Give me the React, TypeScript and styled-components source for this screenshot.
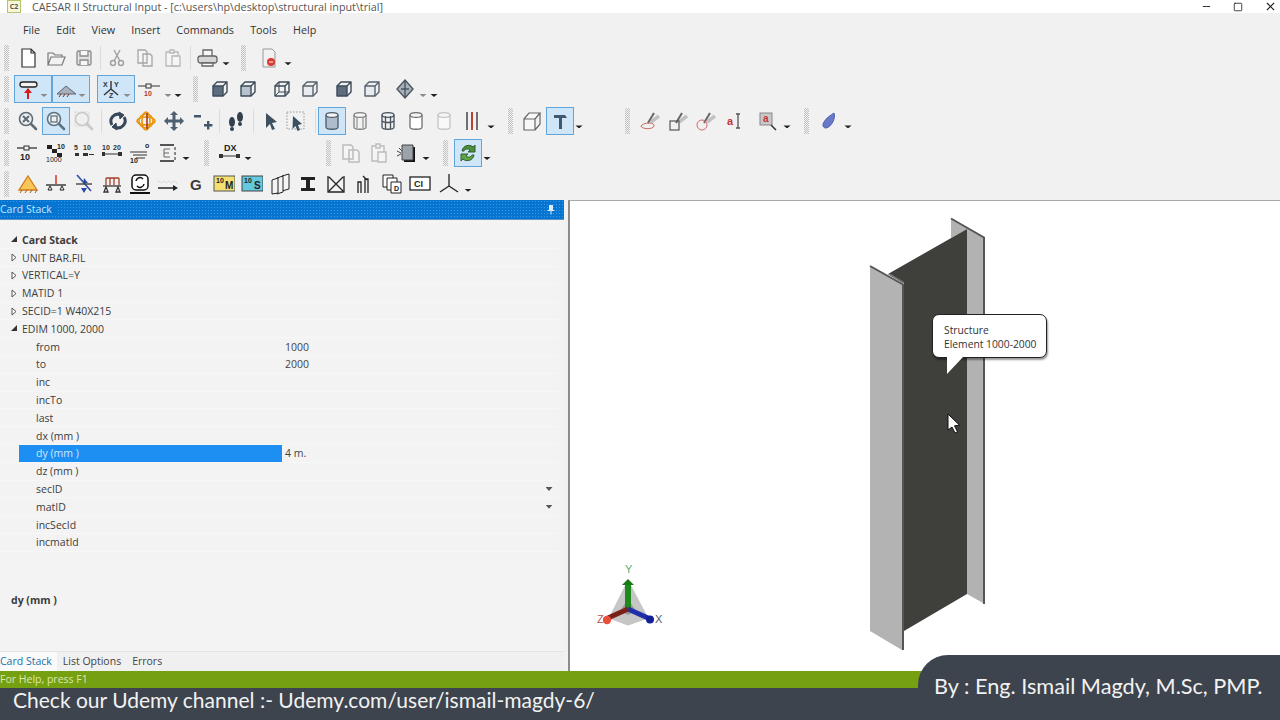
import { FC, ReactNode } from 'react';
import styled, { createGlobalStyle } from 'styled-components';
import { Minus, Square, X } from 'lucide-react';

const GlobalStyle = createGlobalStyle`
  html, body {
    margin: 0;
    padding: 0;
    background: #f0f0f0;
  }
`;

const Page = styled.div`
  position: relative;
  display: flex;
  flex-direction: column;
  width: 1280px;
  height: 720px;
  overflow: hidden;
  background: #f1f1f1;
  color: #3c3c3c;
  font-family: 'Open Sans', 'Noto Sans', sans-serif;
  font-size: 10.5px;
`;

const TitleBar = styled.div`
  display: flex;
  align-items: center;
  height: 13px;
  padding-left: 7px;
  font-size: 10.75px;
  color: #555;
  background: #fff;
`;

const AppBadge = styled.span`
  width: 12px;
  height: 11px;
  margin-right: 11px;
  border: 1px solid #b7c46a;
  background: #f4f6d8;
  font-size: 7px;
  font-weight: 700;
  line-height: 11px;
  text-align: center;
  color: #555;
`;

const TitleText = styled.span`
  flex: 1;
  white-space: nowrap;
`;

const WindowButton = styled.span`
  display: flex;
  justify-content: center;
  width: 20px;
  margin-left: 12px;
  color: #222;
`;

const MenuBar = styled.div`
  display: flex;
  align-items: center;
  height: 25px;
  padding: 4px 0 0 23px;
  gap: 16.1px;
  font-size: 10.8px;
  color: #333;
`;

const ToolRow = styled.div`
  display: flex;
  align-items: center;
  height: 31.6px;
`;

const Tool = styled.span<{ $w: number; $active: boolean }>`
  display: flex;
  align-items: center;
  box-sizing: border-box;
  flex: none;
  width: ${(p) => p.$w}px;
  height: 28px;
  padding-left: ${(p) => (p.$active ? 2 : 3)}px;
  ${(p) =>
    p.$active &&
    `
    background: #cfe5f8;
    border: 1px solid #63a5d8;
  `}
`;

const Gap = styled.span<{ $w: number }>`
  flex: none;
  width: ${(p) => Math.max(p.$w, 0)}px;
  margin-left: ${(p) => Math.min(p.$w, 0)}px;
`;

const Grip = styled.span`
  flex: none;
  width: 5px;
  height: 26px;
  background: repeating-conic-gradient(#c2c2c2 0 25%, transparent 0 50%) 0 0 / 2px 2px;
`;

const Separator = styled.span`
  flex: none;
  width: 1px;
  height: 24px;
  margin: 0 2px;
  background: #dcdcdc;
`;

const DropArrow = styled.span<{ $soft?: boolean }>`
  flex: none;
  width: 10px;
  height: 3px;
  margin-top: 12px;
  background: ${(p) => (p.$soft ? '#8a8a8a' : '#222')};
  clip-path: polygon(1.5px 0, 8.5px 0, 5px 100%);
`;

const IconSvg = styled.svg`
  display: block;
  flex: none;
`;

const Lbl = styled.text<{ $s?: number; $light?: boolean }>`
  font-family: 'Liberation Sans', sans-serif;
  font-size: ${(p) => p.$s ?? 7}px;
  font-weight: ${(p) => (p.$light ? 400 : 700)};
  stroke: none;
`;

const Workspace = styled.div`
  display: flex;
  height: 471px;
`;

const Panel = styled.div`
  display: flex;
  flex-direction: column;
  flex: none;
  width: 564px;
  background: #f3f3f3;
`;

const PanelHeader = styled.div`
  display: flex;
  align-items: center;
  justify-content: space-between;
  height: 20px;
  padding-right: 9px;
  border-bottom: 1px solid #5c92c4;
  box-sizing: border-box;
  color: #c4e6ff;
  background-color: #0675d2;
  background-image: radial-gradient(#3e97e2 0.6px, transparent 0.7px);
  background-size: 3px 3px;
`;

const PanelTitle = styled.span`
  padding-right: 6px;
  background: #0675d2;
`;

const PropertyList = styled.div`
  padding-top: 11.5px;
  height: 340px;
  box-sizing: border-box;
`;

const PropertyRow = styled.div`
  display: grid;
  grid-template-columns: 282px 1fr 18px;
  align-items: center;
  height: 17.8px;
  margin-right: 6px;
  border-bottom: 1px solid #f7f7f7;
  box-sizing: border-box;
`;

const NameCell = styled.div<{ $depth: number; $selected?: boolean; $bold?: boolean }>`
  position: relative;
  display: flex;
  align-items: center;
  height: 100%;
  margin-left: ${(p) => (p.$depth ? 19 : 0)}px;
  padding-left: ${(p) => (p.$depth ? 17 : 22)}px;
  font-weight: ${(p) => (p.$bold ? 700 : 400)};
  color: ${(p) => (p.$selected ? '#cfe8ff' : '#3c3c3c')};
  background: ${(p) => (p.$selected ? '#1e8ff2' : 'transparent')};
`;

const Twist = styled.svg`
  position: absolute;
  left: 10px;
  top: 4px;
`;

const ValueCell = styled.div`
  padding-left: 3px;
  color: #444;
`;

const ComboArrow = styled.span`
  justify-self: center;
  width: 7px;
  height: 4px;
  background: #555;
  clip-path: polygon(0 0, 100% 0, 50% 100%);
`;

const Description = styled.div`
  flex: 1;
  padding: 33px 0 0 11px;
  font-weight: 700;
  border-bottom: 1px solid #e4e4e4;
`;

const Tabs = styled.div`
  display: flex;
  height: 19px;
  flex: none;
  background: #f0f0f0;
`;

const TabItem = styled.span<{ $active?: boolean }>`
  display: flex;
  align-items: center;
  padding: 0 5.5px 0 ${(p) => (p.$active ? 0 : 5.5)}px;
  color: ${(p) => (p.$active ? '#1b6fa8' : '#444')};
  background: ${(p) => (p.$active ? '#fafafa' : 'transparent')};
`;

const Viewport = styled.div`
  position: relative;
  flex: 1;
  margin-left: 4px;
  border-left: 2px solid #8c8c8c;
  border-top: 1px solid #a8a8a8;
  background: #fff;
`;

const SceneSvg = styled.svg`
  display: block;
`;

const AxisLabel = styled.text<{ $c: string }>`
  font-family: 'Liberation Sans', sans-serif;
  font-size: 11px;
  fill: ${(p) => p.$c};
`;

const Callout = styled.div`
  position: absolute;
  left: 362px;
  top: 113px;
  width: 115px;
  height: 44px;
  box-sizing: border-box;
  padding: 8px 0 0 11px;
  border: 1px solid #222;
  border-radius: 7px;
  background: #fff;
  box-shadow: 1px 2px 2px rgba(0, 0, 0, 0.4);
  line-height: 14px;
  font-size: 10.3px;
  color: #333;
  white-space: nowrap;

  &:after {
    content: '';
    position: absolute;
    left: 14px;
    top: 42px;
    width: 16px;
    height: 17px;
    background: #fff;
    clip-path: polygon(0 0, 100% 0, 0 100%);
  }
`;

const StatusBar = styled.div`
  display: flex;
  align-items: center;
  height: 17px;
  font-size: 10.5px;
  color: #dfe8b0;
  background: #74a012;
`;

const PromoBar = styled.div`
  display: flex;
  align-items: center;
  box-sizing: border-box;
  height: 32px;
  padding: 0 0 8px 13px;
  font-family: Lato, 'Open Sans', sans-serif;
  font-size: 21.03px;
  color: #f2f2f2;
  background: #3d444e;
  white-space: nowrap;
`;

const ByLine = styled.div`
  position: absolute;
  right: 0;
  top: 655px;
  display: flex;
  align-items: center;
  box-sizing: border-box;
  width: 362px;
  height: 65px;
  padding: 0 0 4px 16px;
  border-top-left-radius: 30px;
  font-family: Lato, 'Open Sans', sans-serif;
  font-size: 21.7px;
  color: #f2f2f2;
  background: #3d444e;
  white-space: nowrap;
`;

const Ic: FC<{ children: ReactNode }> = ({ children }) => (
  <IconSvg width="22" height="22" viewBox="0 0 22 22" fill="none">
    {children}
  </IconSvg>
);

const Cube: FC<{ fill: string; line: string; wire?: boolean }> = ({ fill, line, wire }) => (
  <g stroke={line} strokeWidth="1.4" strokeLinejoin="round">
    <path d="M4 8h10v10H4z" fill={fill} />
    <path d="M4 8l4-4h10v10l-4 4M14 8l4-4" />
    {wire && <path d="M8 4v10h10M8 14l-4 4" strokeWidth="1" />}
  </g>
);

const Cyl: FC<{ fill: string; line: string; ribs?: boolean; inner?: boolean }> = ({ fill, line, ribs, inner }) => (
  <g stroke={line} strokeWidth="1.3">
    <path d="M5 5v12c0 3 12 3 12 0V5" fill={fill} />
    <ellipse cx="11" cy="5" rx="6" ry="2.4" fill={ribs ? 'none' : '#f4f4f4'} />
    {ribs && <path d="M8.5 6v13M13.5 6v13M5 11c2 2 10 2 12 0" />}
    {inner && <path d="M8 7v11M14 7v11" strokeWidth="1" />}
  </g>
);

const Mag: FC<{ color: string; children?: ReactNode }> = ({ color, children }) => (
  <g stroke={color} fill="none">
    <circle cx="9" cy="9" r="6.5" strokeWidth="1.6" fill="#eef0f2" />
    <path d="M14 14l5 5" strokeWidth="2.6" strokeLinecap="round" />
    {children}
  </g>
);

const Pencil: FC<{ children: ReactNode }> = ({ children }) => (
  <g>
    <path d="M15 3l-6 10" stroke="#666" strokeWidth="2" />
    <path d="M12 12l8-6" stroke="#999" strokeWidth="3.5" opacity="0.55" />
    {children}
  </g>
);

const icons: Record<string, ReactNode> = {
  new: <path d="M5 2h9l4 4v14H5z M14 2v4h4" fill="#fff" stroke="#333" strokeWidth="1.2" />,
  open: <path d="M3 18V6h5l2 2h7v2M3 18l3-8h14l-3 8z" fill="#f2f2f2" stroke="#777" strokeWidth="1.2" />,
  save: <g stroke="#8a8a8a" strokeWidth="1.3"><rect x="4" y="4" width="14" height="14" rx="1.5" fill="#e2e2e2" /><path d="M7 4v5h8V4M7 18v-5h8v5" fill="#f6f6f6" /></g>,
  cut: <g stroke="#a0a0a0" strokeWidth="1.4"><circle cx="7" cy="16" r="2.5" /><circle cx="15" cy="16" r="2.5" /><path d="M8 14l6-11M14 14L8 3" /></g>,
  copy: <path d="M4 3h7l2 2v11H4zM9 7h7l2 2v10H9z" fill="#f5f5f5" stroke="#a5a5a5" strokeWidth="1.3" />,
  paste: <g stroke="#b8b8b8" strokeWidth="1.3" fill="#f5f5f5"><path d="M4 5h12v14H4z" /><path d="M8 3h4v3H8z" /><path d="M10 9h8v10h-8z" /></g>,
  print: <g stroke="#666" strokeWidth="1.3"><path d="M7 9V3h9v6" fill="#f7f7f7" /><rect x="2" y="9" width="19" height="7" rx="2.5" fill="#d5d5d5" /><path d="M6 16h11v3H6z" fill="#fff" /></g>,
  report: <g><path d="M5 2h9l3 3v15H5z" fill="#f2f0f0" stroke="#999" /><circle cx="13" cy="15" r="4" fill="#d93a32" /><path d="M11 15h4" stroke="#fff" /></g>,
  load: <g><rect x="3" y="4" width="17" height="5" rx="2.5" fill="#f3f3f3" stroke="#222" strokeWidth="1.3" /><path d="M10 21v-6H7l4-5 4 5h-3v6z" fill="#d71a1a" /></g>,
  wedge: <g stroke="#5a6a78"><path d="M2 16l9-8 10 8z" fill="#a9b0bc" /><path d="M4 19l2-3M8 19l2-3M12 19l2-3" stroke="#7a3020" /></g>,
  axes: <g stroke="#333" strokeWidth="1.4"><path d="M11 11V3M11 11l-7 6M11 11l7 6" /><Lbl x="3" y="9" fill="#333">X</Lbl><Lbl x="14" y="9" fill="#333">Y</Lbl><Lbl x="9" y="20" fill="#333">Z</Lbl></g>,
  nodeTen: <g><path d="M0 8h22" stroke="#333" /><rect x="8" y="6" width="5" height="4" fill="#eee" stroke="#333" /><Lbl x="6" y="18" fill="#b3352a">10</Lbl></g>,
  cubeA: <Cube fill="#5d6d7e" line="#3c4a58" />,
  cubeB: <Cube fill="#b8c2cc" line="#3c4a58" />,
  cubeC: <Cube fill="none" line="#3c4a58" wire />,
  cubeD: <Cube fill="#e8ecef" line="#56636f" />,
  gem: <path d="M11 2l8 9-8 9-8-9zM7 11h8M11 2v18" fill="#a8b0ba" stroke="#4a5560" strokeWidth="1.4" />,
  zoomAll: <Mag color="#5e6a75"><path d="M6 6l6 6M12 6l-6 6" strokeWidth="2" /></Mag>,
  zoomWin: <Mag color="#5e7382"><rect x="6" y="6" width="6" height="6" strokeWidth="1.3" /></Mag>,
  zoomOff: <Mag color="#c9c9c9"><rect x="2" y="2" width="14" height="14" strokeDasharray="1 1.5" /></Mag>,
  rotate: <g stroke="#36485a" strokeWidth="3" fill="none"><path d="M5 15a7 7 0 0 1 9-10" /><path d="M17 7a7 7 0 0 1-9 10" /><path d="M12 2l5 3-4 4z" fill="#36485a" strokeWidth="1" /><path d="M10 20l-5-3 4-4z" fill="#36485a" strokeWidth="1" /></g>,
  orbit: <g stroke="#e8950c" strokeWidth="1.6" fill="none"><ellipse cx="11" cy="11" rx="9" ry="4" /><ellipse cx="11" cy="11" rx="4" ry="9" /><circle cx="11" cy="11" r="7" /><path d="M12 3v16" stroke="#a83818" /></g>,
  pan: <path d="M11 1l4 4h-2.500v4.500H17V7l4 4-4 4v-2.500h-4.500V17H15l-4 4-4-4h2.500v-4.500H5V15l-4-4 4-4v2.500h4.500V5H7z" fill="#4e6070" />,
  plusMinus: <path d="M3 5h7v2.400H3zM13 14h3v-3h2.400v3h3v2.400h-3v3H16v-3h-3z" fill="#44576a" />,
  feet: <g fill="#33414f"><ellipse cx="7" cy="12" rx="3" ry="5" /><circle cx="7" cy="19" r="2" /><ellipse cx="15" cy="7" rx="3" ry="5" /><circle cx="15" cy="14" r="2" /></g>,
  arrow: <path d="M7 3l11 9-5 1 3 6-3 1-2-6-4 4z" fill="#3d5062" />,
  arrowBox: <g><rect x="2" y="2" width="17" height="17" stroke="#999" strokeDasharray="1.500 1.500" /><path d="M8 6l9 8-4 1 2 5-2.500 1-2-5-3 3z" fill="#3d5062" /></g>,
  cylSolid: <Cyl fill="#aebccb" line="#4d5b68" />,
  cylHide: <Cyl fill="#f2f2f2" line="#808080" inner />,
  cylWire: <Cyl fill="none" line="#48525c" ribs />,
  cylPlain: <Cyl fill="#fff" line="#707070" />,
  cylOff: <Cyl fill="#f9f9f9" line="#c4c4c4" />,
  bars: <g strokeWidth="2"><path d="M6 2v18" stroke="#707070" /><path d="M11 2v18" stroke="#b8442f" /><path d="M16 2v18" stroke="#707070" /></g>,
  boxOpen: <path d="M3 9h11v11H3zM3 9l5-6h11l-5 6M14 20l5-6V3" fill="#f8f8f8" stroke="#666" strokeWidth="1.2" />,
  hammer: <path d="M5 5h11l2 3h-5v11H10V8H5z" fill="#3e5870" />,
  pencilArc: <Pencil><path d="M2 16c3-4 14-4 13 0s-13 3-13 0z" stroke="#c96a60" /></Pencil>,
  pencilBox: <Pencil><rect x="3" y="11" width="9" height="9" stroke="#555" strokeWidth="1.2" /></Pencil>,
  pencilRing: <Pencil><circle cx="7" cy="15" r="5" stroke="#d4686a" /></Pencil>,
  textCursor: <g><Lbl $s={11} x="4" y="15" fill="#c4323a">a</Lbl><path d="M15 4v14M13 4h4M13 18h4" stroke="#555" strokeWidth="1.300" /></g>,
  textBox: <g><rect x="3" y="3" width="12" height="12" fill="#c9c9c9" stroke="#888" /><Lbl $s={10} x="6" y="12" fill="#c4323a">a</Lbl><path d="M14 15l5 5" stroke="#333" strokeWidth="1.500" /></g>,
  feather: <path d="M16 3c2 4-2 14-8 15-3 0-4-3-2-6 2-4 7-7 10-9z" fill="#6a78c9" stroke="#5060b0" />,
  copyOff: <path d="M3 3h8l2 2v12H3zM9 8h8l2 2v10H9z" fill="#f5f5f5" stroke="#bcbcbc" strokeWidth="1.5" />,
  pasteOff: <g stroke="#bcbcbc" strokeWidth="1.400" fill="#f5f5f5"><path d="M4 4h12v15H4z" /><path d="M8 2h4v4H8z" /><path d="M10 10h8v10h-8z" /></g>,
  pasteDark: <g><path d="M8 5h11v15H8z" fill="#111" /><path d="M6 3h11v15H6z" fill="#9aa2aa" stroke="#444" /><path d="M1 9l4 2M1 14l4-2M3 6l3 3" stroke="#444" /></g>,
  sync: <g><path d="M5 9c1-6 8-7 11-4l2-2v7h-7l2-2c-2-2-5-1-6 1z" fill="#4f8f3c" stroke="#2f5f2a" /><path d="M17 13c-1 6-8 7-11 4l-2 2v-7h7l-2 2c2 2 5 1 6-1z" fill="#5da547" stroke="#2f5f2a" /></g>,
  dim: <g><path d="M0 6h20" stroke="#333" strokeWidth="1.300" /><rect x="7" y="4" width="5" height="4" fill="#eee" stroke="#333" /><Lbl $s={9} x="3" y="18" fill="#222">10</Lbl></g>,
  stair: <g fill="#222"><path d="M2 3h5v4H2zM7 7h5v4H7zM12 11h5v4h-5z" /><Lbl x="12" y="7">10</Lbl><Lbl $light x="1" y="20">1000</Lbl></g>,
  rowDim: <g fill="#333"><Lbl x="1" y="8">5</Lbl><Lbl x="10" y="8">10</Lbl><path d="M2 11h4v3H2zM10 11h5v3h-5zM16 12h5v1h-5z" /></g>,
  rowNode: <g fill="#333"><Lbl x="1" y="8">10</Lbl><Lbl x="12" y="8">20</Lbl><path d="M1 12h20" stroke="#333" /><path d="M1 10h3v4H1zM17 10h4v4h-4z" /></g>,
  lines: <g stroke="#333"><path d="M1 10h17M4 13h14M7 16h9" /><Lbl x="16" y="6" fill="#222">o</Lbl><Lbl x="1" y="21" fill="#222">10</Lbl></g>,
  eBox: <g stroke="#222"><path d="M3 3h14M3 19h14" strokeWidth="1.500" /><path d="M18 5v3M18 10v3M18 15v3" /><path d="M7 7h6M7 11h5M7 15h6M7 7v8" stroke="#666" /></g>,
  dx: <g><Lbl $s={9} x="5" y="9" fill="#222">DX</Lbl><path d="M0 14h20" stroke="#333" /><path d="M0 12h4v4H0zM17 12h4v4h-4z" fill="#333" /></g>,
  support: <g><path d="M11 3l9 14H2z" fill="#f6c65a" stroke="#d17a1a" strokeWidth="1.300" /><path d="M3 20l2-3M8 20l2-3M13 20l2-3M18 20l2-3" stroke="#a75c1a" /></g>,
  pointLoad: <g stroke="#222"><path d="M1 12h20" strokeWidth="1.300" /><path d="M11 2v9" stroke="#d4342c" strokeWidth="1.500" /><path d="M3 17l2-4 2 4zM15 17l2-4 2 4z" fill="#fff" /></g>,
  moment: <g><path d="M4 2l14 16" stroke="#3352a0" strokeWidth="1.600" /><path d="M3 11h16" stroke="#333" strokeWidth="1.300" /><path d="M11 5l4 5h-5zM11 20l-3-5h6z" fill="#2a46b0" /></g>,
  uniform: <g stroke="#a6402e" strokeWidth="1.300"><path d="M5 5h13M5 5v7M9 5v7M13 5v7M18 5v7" /><path d="M2 13h18" stroke="#333" /><path d="M3 19l2-5 2 5zM15 19l2-5 2 5z" fill="#fff" stroke="#333" /></g>,
  snapshot: <g stroke="#111"><rect x="3" y="2" width="16" height="15" rx="4" fill="#fff" strokeWidth="1.500" /><path d="M7 8a4 4 0 0 1 7-2M15 11a4 4 0 0 1-7 2" strokeWidth="1.500" /><path d="M1 20h20" strokeWidth="2" /></g>,
  wave: <g><path d="M1 9c2-3 3 3 5 0s3 3 5 0 3 3 5 0 3 3 5 0" stroke="#bbb" strokeDasharray="1 1" /><path d="M1 15h17" stroke="#222" strokeWidth="1.500" /><path d="M16 12l5 3-5 3z" fill="#222" /></g>,
  letterG: <Lbl $s={15} x="5" y="17" fill="#3c3c3c">G</Lbl>,
  yellowM: <g><rect x="1" y="3" width="21" height="15" fill="#f4e072" stroke="#555" /><Lbl x="3" y="10" fill="#222">10</Lbl><Lbl $s={10} x="12" y="16" fill="#222">M</Lbl></g>,
  cyanS: <g><rect x="1" y="3" width="21" height="15" fill="#64c8de" stroke="#444" /><Lbl x="3" y="10" fill="#222">10</Lbl><Lbl $s={10} x="13" y="16" fill="#222">S</Lbl></g>,
  sheets: <g stroke="#222" fill="#f5f5f5"><path d="M13 3l7-2v15l-7 2z" /><path d="M8 5l6-2v16l-6 2z" /><path d="M3 7l6-2v15l-6 1z" /></g>,
  beamI: <path d="M4 4h14v3h-5v8h5v3H4v-3h5V7H4z" fill="#222" />,
  cross: <g stroke="#222" strokeWidth="1.300"><path d="M3 3v16h1M19 3v16h-1M4 4l14 14M18 4L4 18M4 19h14" /></g>,
  hooks: <g stroke="#222" strokeWidth="1.300"><path d="M5 20V9h3v11M12 20V6h3v14M10 3l4 4" /></g>,
  docs: <g stroke="#222" fill="#fff"><path d="M2 2h10v12H2z" /><path d="M6 5h10v12H6z" /><path d="M10 9h10v11H10z" /><Lbl x="13" y="18" fill="#222">D</Lbl></g>,
  ci: <g><rect x="1" y="4" width="20" height="13" fill="#fff" stroke="#222" strokeWidth="1.300" /><Lbl $s={9} x="5" y="14" fill="#222">CI</Lbl></g>,
  triaxis: <path d="M11 1v12M11 13l-9 6M11 13l9 6" stroke="#222" strokeWidth="1.300" />,
};

// '|' separator, '#' grip, '>' black drop arrow, '~' gray drop arrow, '*' highlighted, '+' wide button, numbers are gaps
const rows: (string | number)[][] = [
  [4, '#', 5, 'new', 'open', 'save', '|', 'cut', 'copy', 'paste', 1, '|', 'print', '>', 10, '#', 9, 'report', '>'],
  [4, '#', 5, '*+load', '*+wedge', 7, '*+axes', 'nodeTen', '~', '>', 10, '#', 8, 'cubeA', 'cubeB', 6, 'cubeC', 'cubeD', 6, 'cubeA', 'cubeD', 5, 'gem', -1, '~', 1, '>'],
  [4, '#', 5, 'zoomAll', '*zoomWin', 'zoomOff', 1, '|', 'rotate', 'orbit', 'pan', 'plusMinus', 1, '|', 'feet', 1, '|', 'arrow', -2, 'arrowBox', 3, '|', '*cylSolid', 'cylHide', 'cylWire', 'cylPlain', 'cylOff', 'bars', '>', 12, '#', 5, 'boxOpen', '*hammer', '>', 41, '#', 6, 'pencilArc', 'pencilBox', 'pencilRing', 'textCursor', 6, 'textBox', '>', 12, '#', 6, 'feather', '>'],
  [4, '#', 5, 'dim', 'stair', 'rowDim', 'rowNode', 'lines', 'eBox', -1, '>', 13, '#', 7, 'dx', -1, '>', 73, '#', 6, 'copyOff', 'pasteOff', 'pasteDark', '>', 12, '#', 6, '*sync', '>'],
  [4, '#', 5, 'support', 'pointLoad', 'moment', 'uniform', 'snapshot', 'wave', 'letterG', 'yellowM', 'cyanS', 'sheets', 'beamI', 'cross', 'hooks', 'docs', 'ci', 1, 'triaxis', '>'],
];

const ToolItem: FC<{ item: string | number }> = ({ item }) => {
  if (typeof item === 'number') return <Gap $w={item} />;
  if (item === '#') return <Grip />;
  if (item === '|') return <Separator />;
  if (item === '>') return <DropArrow />;
  if (item === '~') return <DropArrow $soft />;
  const name = item.replace(/[*+]/g, '');
  const wide = item.includes('+');
  return (
    <Tool $w={wide ? 38 : 28} $active={item.startsWith('*')}>
      <Ic>{icons[name]}</Ic>
      {wide && <DropArrow $soft />}
    </Tool>
  );
};

const Toolbars: FC = () => (
  <>
    {rows.map((row, i) => (
      <ToolRow key={i}>
        {row.map((item, j) => (
          <ToolItem key={j} item={item} />
        ))}
      </ToolRow>
    ))}
  </>
);

interface IProperty {
  name: string;
  depth: number;
  value?: string;
  twist?: 'open' | 'closed';
  bold?: boolean;
  selected?: boolean;
  combo?: boolean;
}

const properties: IProperty[] = [
  { name: 'Card Stack', depth: 0, twist: 'open', bold: true },
  { name: 'UNIT BAR.FIL', depth: 0, twist: 'closed' },
  { name: 'VERTICAL=Y', depth: 0, twist: 'closed' },
  { name: 'MATID 1', depth: 0, twist: 'closed' },
  { name: 'SECID=1 W40X215', depth: 0, twist: 'closed' },
  { name: 'EDIM 1000, 2000', depth: 0, twist: 'open' },
  { name: 'from', depth: 1, value: '1000' },
  { name: 'to', depth: 1, value: '2000' },
  { name: 'inc', depth: 1 },
  { name: 'incTo', depth: 1 },
  { name: 'last', depth: 1 },
  { name: 'dx (mm )', depth: 1 },
  { name: 'dy (mm )', depth: 1, value: '4 m.', selected: true },
  { name: 'dz (mm )', depth: 1 },
  { name: 'secID', depth: 1, combo: true },
  { name: 'matID', depth: 1, combo: true },
  { name: 'incSecId', depth: 1 },
  { name: 'incmatId', depth: 1 },
];

const TwistIcon: FC<{ kind: 'open' | 'closed' }> = ({ kind }) => (
  <Twist width="8" height="9" viewBox="0 0 8 9">
    {kind === 'open' ? (
      <path d="M1 7h6V1z" fill="#333" />
    ) : (
      <path d="M2 1l4 3.500L2 8z" fill="#fff" stroke="#555" />
    )}
  </Twist>
);

const Scene: FC = () => (
  <SceneSvg width="710" height="468" viewBox="570 202 710 468">
    <polygon points="951,220 983,238 983,604 967,595 967,230 951,239" fill="#b2b2b2" />
    <polygon points="888,275 967,230 967,595 904,632 904,284" fill="#3f3f3b" />
    <polygon points="870,267 902,285 902,651 870,632" fill="#b3b3b3" />
    <path d="M951 219.500L984 238.500V605" stroke="#555" strokeWidth="2" fill="none" />
    <path d="M870 267l33 18.500V651" stroke="#555" strokeWidth="2" fill="none" />
    <path d="M889 275l15 9" stroke="#777" strokeWidth="2" />
    <polygon points="612,618 628,586 645,618 628,624" fill="#c6c6c6" stroke="#c6c6c6" strokeWidth="5" strokeLinejoin="round" />
    <polygon points="620,612 628,600 636,612 628,616" fill="#999" />
    <path d="M628 610V584" stroke="#1e8a1e" strokeWidth="6" />
    <path d="M622 586l6-6 6 6z" fill="#1a7a1a" />
    <path d="M628 610l20 9" stroke="#1f2fa8" strokeWidth="5" />
    <circle cx="650" cy="620.500" r="4" fill="#14209a" />
    <path d="M628 610l-20 9" stroke="#7a2016" strokeWidth="5" />
    <circle cx="607" cy="621" r="4.200" fill="#e8503c" />
    <AxisLabel $c="#63b06f" x="625" y="574">Y</AxisLabel>
    <AxisLabel $c="#525a70" x="655" y="624">X</AxisLabel>
    <AxisLabel $c="#b85a50" x="597" y="624">Z</AxisLabel>
    <path d="M948 415l0 16 4-3 3 6 2.500-1.200-3-6 5-.6z" fill="#fff" stroke="#111" strokeWidth="1" />
  </SceneSvg>
);

const App: FC = () => (
  <Page>
    <GlobalStyle />
    <TitleBar>
      <AppBadge>C2</AppBadge>
      <TitleText>CAESAR II Structural Input - [c:\users\hp\desktop\structural input\trial]</TitleText>
      <WindowButton><Minus size={11} /></WindowButton>
      <WindowButton><Square size={10} /></WindowButton>
      <WindowButton><X size={13} /></WindowButton>
    </TitleBar>
    <MenuBar>
      {['File', 'Edit', 'View', 'Insert', 'Commands', 'Tools', 'Help'].map((m) => (
        <span key={m}>{m}</span>
      ))}
    </MenuBar>
    <Toolbars />
    <Workspace>
      <Panel>
        <PanelHeader>
          <PanelTitle>Card Stack</PanelTitle>
          <svg width="8" height="11" viewBox="0 0 8 11">
            <path d="M2 1h4v5h1.500v1h-3v3.500h-1V7h-3V6H2z" fill="#d8ecfb" />
          </svg>
        </PanelHeader>
        <PropertyList>
          {properties.map((p) => (
            <PropertyRow key={p.name}>
              <NameCell $depth={p.depth} $selected={p.selected} $bold={p.bold}>
                {p.twist && <TwistIcon kind={p.twist} />}
                {p.name}
              </NameCell>
              <ValueCell>{p.value}</ValueCell>
              {p.combo && <ComboArrow />}
            </PropertyRow>
          ))}
        </PropertyList>
        <Description>dy (mm )</Description>
        <Tabs>
          <TabItem $active>Card Stack</TabItem>
          <TabItem>List Options</TabItem>
          <TabItem>Errors</TabItem>
        </Tabs>
      </Panel>
      <Viewport>
        <Scene />
        <Callout>
          Structure
          <br />
          Element 1000-2000
        </Callout>
      </Viewport>
    </Workspace>
    <StatusBar>For Help, press F1</StatusBar>
    <PromoBar>Check our Udemy channel :- Udemy.com/user/ismail-magdy-6/</PromoBar>
    <ByLine>By : Eng. Ismail Magdy, M.Sc, PMP.</ByLine>
  </Page>
);

export default App;
